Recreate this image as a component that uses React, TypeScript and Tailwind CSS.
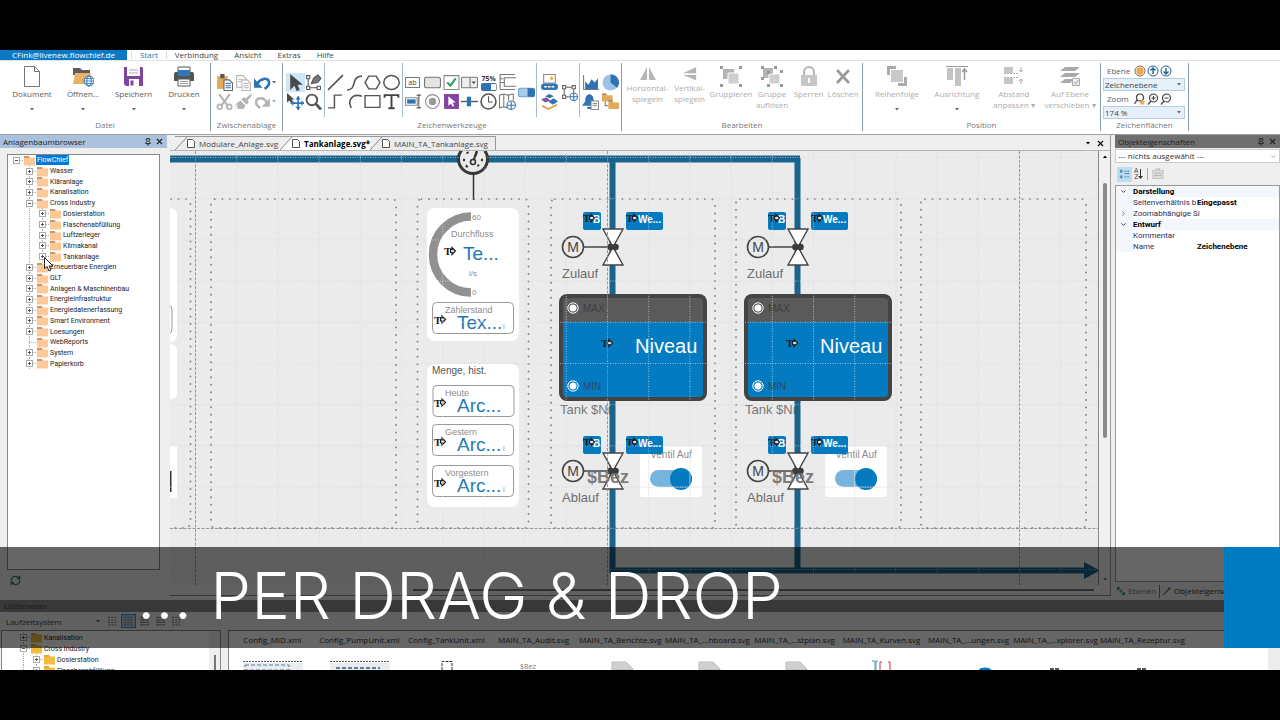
import React, { useState } from "react";
import { X, Pin, RefreshCw, ChevronDown, ChevronRight } from "lucide-react";

type IcProps = { children: React.ReactNode; className?: string; box?: string };

const Ic = ({ children, className = "w-[17px] h-[17px]", box = "0 0 16 16" }: IcProps) => (
    <svg viewBox={box} className={className} fill="none" aria-hidden="true">
        {children}
    </svg>
);

const Caret = ({ className = "text-[#666]" }: { className?: string }) => (
    <svg viewBox="0 0 4 3" className={`h-[3px] w-[4px] shrink-0 ${className}`} aria-hidden="true">
        <path d="M0 0h4L2 2.5z" fill="currentColor" />
    </svg>
);

/* ---------- ribbon ---------- */

const BigButton = ({ label, icon, width, caret, off }: {
    label: string[]; icon: React.ReactNode; width: string; caret?: boolean; off?: boolean;
}) => (
    <button type="button" className={`flex h-[46px] flex-col items-center ${width} ${off ? "text-[#adadad]" : "text-[#5a5a5a]"}`}>
        {icon}
        {label.map((l) => (
            <span key={l} className="block leading-[11px] whitespace-nowrap">{l}</span>
        ))}
        {caret && <span className="mt-auto flex h-[6px] items-center"><Caret /></span>}
    </button>
);

const Tool = ({ name, children, active }: { name: string; children: React.ReactNode; active?: boolean }) => (
    <button type="button" aria-label={name} className={`flex h-[19px] items-center justify-center ${active ? "bg-[#cfe6f8]" : ""}`}>
        <Ic>{children}</Ic>
    </button>
);

const Group = ({ title, width, children }: { title: string; width: string; children: React.ReactNode }) => (
    <section className={`flex shrink-0 flex-col border-r border-[#8b9ba8] ${width}`}>
        <div className="flex flex-1 justify-center">{children}</div>
        <h2 className="pb-[1px] text-center leading-[10px] text-[#777]">{title}</h2>
    </section>
);

const Sep = () => <i className="mx-[1px] h-[54px] w-px shrink-0 bg-[#a5bccb]" />;

const G = "#b4b4b4";
const D = "#555";
const B = "#2f73b5";

const Ribbon = () => (
    <div className="flex h-[73px] shrink-0 overflow-hidden bg-white pt-[2px] pb-[3px]">
        <Group title="Datei" width="w-[211px]">
            <div className="flex w-full gap-[1px] pt-[3px] pl-[7px]">
                <BigButton label={["Dokument"]} width="w-[50px]" caret icon={
                    <Ic className="mb-[1px] h-[21px] w-[20px]" box="0 0 20 21"><path d="M2.500 .5h10l5 5v15h-15zM12.500 .5v5h5" stroke="#777" fill="#fff" /></Ic>
                } />
                <BigButton label={["Öffnen..."]} width="w-[50px]" caret icon={
                    <Ic className="mb-[1px] h-[21px] w-[22px]" box="0 0 22 21">
                        <path d="M1 2h7l2 2h8v5H1z" fill="#5d5d5d" /><path d="M3 7h16l-3 11H1z" fill="#eab168" />
                        <circle cx="17" cy="15" r="5" fill="#fff" stroke={B} /><ellipse cx="17" cy="15" rx="2.200" ry="5" stroke={B} /><path d="M12 15h10M13 12.500h8M13 17.500h8" stroke={B} strokeWidth=".8" />
                    </Ic>
                } />
                <BigButton label={["Speichern"]} width="w-[49px]" caret icon={
                    <Ic className="mb-[1px] h-[21px] w-[21px]" box="0 0 21 21">
                        <path d="M1 1h18l1 1v18H3l-2-2z" fill="#7d45a0" /><path d="M4 1h13v9H4z" fill="#fff" /><path d="M6 4h9M6 7h9" stroke="#aaa" /><path d="M6 13h10v7H6z" fill="#fff" /><path d="M7.500 14.500h3v5h-3z" fill="#7d45a0" />
                    </Ic>
                } />
                <BigButton label={["Drucken"]} width="w-[50px]" caret icon={
                    <Ic className="mb-[1px] h-[21px] w-[22px]" box="0 0 22 21">
                        <path d="M5 1h12v5H5z" fill="#fff" stroke="#555" /><path d="M2 6h18l1 2v7H1V8z" fill="#555" /><path d="M5 4h12v6H5z" fill="#3379b8" /><path d="M5 13h12v7H5z" fill="#fff" stroke="#555" /><path d="M7 15.500h8M7 17.500h8" stroke="#999" />
                    </Ic>
                } />
            </div>
        </Group>

        <Group title="Zwischenablage" width="w-[72px]">
            <div className="grid w-[64px] auto-rows-min grid-cols-[19px_19px_19px_7px] items-center pt-[10px]">
                <Tool name="Einfügen">
                    <path d="M1 2h10v12H1z" fill="#e3aa5c" /><path d="M4 0h4v4H4z" fill="#555" /><path d="M7.500 5.500h5l3 3v7h-8z" fill="#fff" stroke="#666" /><path d="M9 9h5M9 11h5M9 13h5" stroke={B} />
                </Tool>
                <Tool name="Kopieren">
                    <path d="M1.500 1.500h6l3 3v8h-9z" fill="#fff" stroke={G} /><path d="M6.500 5.500h5l3 3v7h-8z" fill="#fff" stroke={G} /><path d="M3 5h4M3 7h3M8 9h5M8 11h5M8 13h5" stroke={G} />
                </Tool>
                <Tool name="Rückgängig"><path d="M3 9c3-5 10-6 11-2 1 3-1 5-4 7" stroke={B} strokeWidth="2.400" /><path d="M0 4v9h8z" fill={B} /></Tool>
                <Caret />
                <Tool name="Ausschneiden">
                    <path d="M3 1l8 11M13 1L5 12" stroke={G} strokeWidth="2" /><circle cx="3.500" cy="13" r="2.300" stroke={G} strokeWidth="1.600" /><circle cx="12.500" cy="13" r="2.300" stroke={G} strokeWidth="1.600" />
                </Tool>
                <Tool name="Format übertragen"><path d="M15 1l-5 4-2-1-2 2 5 5 2-2-1-2 4-5zM5 7l5 5-2 3H2l1-2H0l3-2H0z" fill={G} /></Tool>
                <Tool name="Wiederholen"><path d="M12 9C9 3 2 4 2 9c0 2 2 4 4 5" stroke={G} strokeWidth="2.400" /><path d="M15 5v8H7z" fill={G} /></Tool>
                <Caret className="text-[#aaa]" />
            </div>
        </Group>

        <Group title="Zeichenwerkzeuge" width="w-[339px]">
            <div className="flex w-full items-start pl-[3px]">
                <div className="grid w-[37px] grid-cols-2 pt-[10px]">
                    <Tool name="Auswahl" active><path d="M3 0v15l4-4 2 5 3-1-2-5h5z" fill="#4a4a4a" /></Tool>
                    <Tool name="Punkte bearbeiten"><path d="M1.500 1.500h3v3h-3zM1.500 11.500h3v3h-3zM11.500 11.500h3v3h-3zM3 5v6M5 13h6" stroke={D} /><path d="M6 9l2-5 4-3 3 3-3 4z" stroke={D} fill="#777" /></Tool>
                    <Tool name="Verschieben"><path d="M0 0v9l2.500-2 1.500 3 1.500-1L4.500 6H7z" fill="#4a4a4a" /><path d="M10.500 3v13M4 9.500h13" stroke={B} strokeWidth="1.500" /><path d="M8 6l2.500-3L13 6zM8 13l2.500 3 2.500-3zM6 7v5L3 9.500zM13.500 7v5l3-2.500z" fill={B} /></Tool>
                    <Tool name="Lupe"><circle cx="6.500" cy="6.500" r="5" stroke={D} strokeWidth="1.800" /><path d="M10 10l5 5.500" stroke={D} strokeWidth="2.600" /></Tool>
                </div>
                <Sep />
                <div className="grid w-[75px] grid-cols-4 pt-[10px]">
                    <Tool name="Linie"><path d="M1 15L15 1" stroke={D} strokeWidth="1.500" /></Tool>
                    <Tool name="Kurve"><path d="M1 15c10 0 3-13 14-13" stroke={D} strokeWidth="1.500" /></Tool>
                    <Tool name="Vieleck"><path d="M4.500 2h7L15 8l-3.500 6h-7L1 8z" stroke={D} strokeWidth="1.400" /></Tool>
                    <Tool name="Ellipse"><ellipse cx="8" cy="8" rx="7.300" ry="6.500" stroke={D} strokeWidth="1.400" /></Tool>
                    <Tool name="Linienzug"><path d="M1 14h6V2h7" stroke={D} strokeWidth="1.400" /></Tool>
                    <Tool name="Bogen"><path d="M15 3C6 0 1 7 5 14" stroke={D} strokeWidth="1.500" /></Tool>
                    <Tool name="Rechteck"><path d="M1 2.500h14v11H1z" stroke={D} strokeWidth="1.300" /></Tool>
                    <Tool name="Text"><path d="M1.500 4.500V2h13v2.500M8 2v12M5 14.300h6" stroke="#444" strokeWidth="1.800" /></Tool>
                </div>
                <Sep />
                <div className="grid w-[113px] grid-cols-6 pt-[10px]">
                    <button type="button" aria-label="Textfeld" className="my-[4px] mr-[3px] ml-[1px] border border-[#777] text-[7px] leading-[9px] text-[#444]">ab</button>
                    <Tool name="Schaltfläche"><rect x=".5" y="3" width="15" height="10" rx="2" stroke="#777" fill="#e4e4e4" /></Tool>
                    <Tool name="Kontrollkästchen"><path d="M1 1.500h14v13H1z" stroke="#888" /><path d="M4 8l3 3 5-7" stroke="#2c9a63" strokeWidth="2" /></Tool>
                    <Tool name="Kombinationsfeld"><rect x=".5" y="3" width="15" height="10" rx="1" stroke="#777" fill="#eee" /><path d="M8.500 3v10" stroke="#777" /><path d="M10 7h4l-2 2.500z" fill="#444" /></Tool>
                    <button type="button" aria-label="Balken" className="flex flex-col items-center justify-center text-[7px] leading-[8px] font-bold text-[#333]">
                        75%
                        <span className="block h-[8px] w-[16px] rounded-[2px] border border-[#2f73b5] border-r-[#999] bg-linear-to-r from-[#2f73b5] from-65% to-white to-65%" />
                    </button>
                    <Tool name="Lineal"><path d="M1 .5h14M1 .5v14M1 4.500h3M1 8h4M1 14.500h14M5 3.500h11M5 3.500v8h11" stroke="#777" /></Tool>
                    <Tool name="Eingabe"><path d="M.5 4.500h11v7H.5z" stroke="#888" /><path d="M2 6h8v4H2z" fill={B} /><path d="M11 2h4M13 2v12M11 14h4" stroke="#555" /></Tool>
                    <Tool name="Optionsfeld"><circle cx="8" cy="8" r="6.500" stroke="#888" /><circle cx="8" cy="8" r="3.500" fill="#999" /></Tool>
                    <Tool name="Zeiger"><path d="M1 1h14v14H1z" fill="#8442a4" /><path d="M5 3v9l2.500-2 1.500 3 1.500-1L9 9h3z" fill="#fff" /></Tool>
                    <Tool name="Regler"><path d="M0 8h16" stroke="#555" strokeWidth="1.300" /><path d="M5.500 3.500h4v9h-4z" fill={B} /></Tool>
                    <Tool name="Uhr"><circle cx="8" cy="8" r="7" stroke={D} strokeWidth="1.500" /><path d="M8 3v5.500h4" stroke={D} /></Tool>
                    <Tool name="Karte"><path d="M.5 2l4-1 4 1 5-1v6M.5 2v12l4-1 4 1M4.500 1v12M9 2v5" stroke="#777" /><circle cx="11.500" cy="11.500" r="4" stroke={B} /><path d="M8 11.500h7M11.500 8v7" stroke={B} /></Tool>
                </div>
                <div className="grid w-[18px] pt-[20px]">
                    <Tool name="Schalter"><rect x=".5" y="4" width="15" height="8" rx="2" fill="#a5cdea" stroke="#6fa5cf" /><path d="M9 4h5q2 0 2 2v4q0 2-2 2H9z" fill={B} /></Tool>
                </div>
                <Sep />
                <div className="grid w-[23px] grid-cols-1 pt-[10px]">
                    <Tool name="Bild"><path d="M2.500 .5h11v8h-11z" fill="#fff" stroke="#888" /><circle cx="10" cy="4" r="1.600" fill="#eab13c" /><rect x="0" y="9" width="16" height="6" rx="3" fill={B} /><path d="M3 12h10" stroke="#fff" strokeWidth="1.600" strokeDasharray="2.500 1" /></Tool>
                    <Tool name="Symbole"><path d="M8 1l4 2-4 2-4-2z" fill={B} /><path d="M0 6l5-2 4 3-5 2z" fill="#7a5ba8" /><path d="M7 8l5-3 4 3-5 3z" fill={B} /><path d="M1 11l6 3 8-4v2l-8 4-6-3z" fill="#e0a050" /></Tool>
                </div>
                <div className="grid w-[17px] pt-[20px]">
                    <Tool name="Netzwerk"><path d="M1.500 1.500h3v3h-3zM10.500 1.500h3v3h-3zM1.500 10.500h3v3h-3zM5 3h5M3 5v5M12 5v3M5 12h3" stroke="#666" /><circle cx="12" cy="12" r="3.500" stroke={B} fill="#fff" /><path d="M8.500 12h7M12 8.500v7" stroke={B} /></Tool>
                </div>
                <Sep />
                <div className="grid w-[39px] grid-cols-2 pt-[10px]">
                    <Tool name="Kurven"><path d="M1.500 1v13.500H16" stroke="#777" /><path d="M3 14V7l3 3 3-5 3 3 3-4v10z" fill={B} /></Tool>
                    <Tool name="Kreisdiagramm"><circle cx="8" cy="8" r="7.500" fill="#9cc3e6" /><path d="M8 8V.5A7.500 7.500 0 0 1 14 13z" fill={B} /></Tool>
                    <Tool name="Alarme"><path d="M0 12l3-4c0-4 1-6 4-7 3 1 4 3 4 6v5zM5 13h4v2H5z" fill={B} /><path d="M8.500 7.500h7v8h-7z" fill="#fff" stroke="#888" /><path d="M10 10h4M10 12h4" stroke="#888" /></Tool>
                    <Tool name="Ordner"><path d="M0 1h4l1 1h5v6H0z" fill="#e3aa5c" /><path d="M6 8h4l1 1h5v6H6z" fill="#e3aa5c" /><path d="M0 1h4M6 7.500h4M3 8v4h3" stroke="#777" /></Tool>
                </div>
            </div>
        </Group>

        <Group title="Bearbeiten" width="w-[241px]">
            <div className="flex w-full pt-[3px] pl-[4px]">
                <BigButton off label={["Horizontal-", "spiegeln"]} width="w-[43px]" icon={<Ic className="h-[16px] w-[16px]"><path d="M7 1v13H0zM9 1v13h7z" fill={G} /></Ic>} />
                <BigButton off label={["Vertikal-", "spiegeln"]} width="w-[41px]" icon={<Ic className="h-[16px] w-[14px]"><path d="M15 0v7H0zM15 9v6L0 9z" fill={G} /></Ic>} />
                <BigButton off label={["Gruppieren"]} width="w-[42px]" icon={
                    <Ic className="mb-[1px] h-[21px] w-[22px]" box="0 0 22 21"><path d="M3 3h11v10H3z" fill={G} /><path d="M8 7h11v11H8z" fill="#cfcfcf" stroke="#fff" /><path d="M0 0h3v3H0zM19 0h3v3h-3zM0 18h3v3H0zM19 18h3v3h-3z" fill="#999" /></Ic>
                } />
                <BigButton off label={["Gruppe", "auflösen"]} width="w-[40px]" icon={
                    <Ic className="mb-[1px] h-[21px] w-[22px]" box="0 0 22 21"><path d="M2 2h10v10H2z" fill={G} /><path d="M8 8h11v10H8z" fill="#cfcfcf" stroke="#fff" /><path d="M0 0h3v3H0zM13 0h3v3h-3zM0 11h3v3H0zM6 5h3v3H6zM19 4h3v3h-3zM6 18h3v3H6zM19 18h3v3h-3z" fill="#999" /></Ic>
                } />
                <BigButton off label={["Sperren"]} width="w-[33px]" icon={
                    <Ic className="mb-[1px] h-[21px] w-[18px]" box="0 0 18 21"><path d="M4 10V6a5 5 0 0 1 10 0v4" stroke={G} strokeWidth="2" /><path d="M1 9h16v11H1z" fill="#c6c6c6" /><path d="M8 12h2v5H8z" fill="#fff" /></Ic>
                } />
                <BigButton off label={["Löschen"]} width="w-[36px]" icon={
                    <Ic className="mb-[1px] h-[21px] w-[16px]" box="0 0 16 21"><path d="M2 4l12 13M14 4L2 17" stroke="#999" strokeWidth="2.600" /></Ic>
                } />
            </div>
        </Group>

        <Group title="Position" width="w-[238px]">
            <div className="flex w-full pt-[3px] pl-[4px]">
                <BigButton off caret label={["Reihenfolge"]} width="w-[60px]" icon={
                    <Ic className="mb-[1px] h-[21px] w-[21px]" box="0 0 21 21"><path d="M0 0h9v3H3v6H0zM20 20h-9v-3h6v-6h3z" fill="#aaa" /><path d="M4 4h12v12H4z" fill="#c9c9c9" /></Ic>
                } />
                <BigButton off caret label={["Ausrichtung"]} width="w-[60px]" icon={
                    <Ic className="mb-[1px] h-[21px] w-[22px]" box="0 0 22 21"><path d="M0 .5h22" stroke="#999" /><path d="M1 2h6v12H1zM9 2h6v18H9z" fill="#c3c3c3" /><path d="M18.500 14V3M16 6l2.500-3L21 6" stroke="#999" strokeWidth="1.500" /></Ic>
                } />
                <BigButton off label={["Abstand", "anpassen ▾"]} width="w-[54px]" icon={
                    <Ic className="mb-[1px] h-[21px] w-[20px]" box="0 0 20 21"><path d="M0 1h9v6H0zM0 12h9v6H0z" fill="#c6c6c6" /><path d="M0 7.500h14M0 11.500h14" stroke="#aaa" strokeDasharray="2 1" /><path d="M17 1v5M15 4l2 2 2-2M17 18v-5M15 15l2-2 2 2" stroke="#aaa" /></Ic>
                } />
                <BigButton off label={["Auf Ebene", "verschieben ▾"]} width="w-[58px]" icon={
                    <Ic className="mb-[1px] h-[21px] w-[22px]" box="0 0 22 21"><path d="M6 1h15l-5 4H1zM6 7h15l-5 4H1zM6 13h10l-5 4H1z" fill="#aaa" /><path d="M13.500 12.500h7v7h-7z" fill="#eee" stroke="#aaa" /><path d="M15 16l1.500 2 3-4" stroke="#999" /></Ic>
                } />
            </div>
        </Group>

        <Group title="Zeichenflächen" width="w-[88px]">
            <div className="flex w-full flex-col pr-[3px] pl-[2px] text-[#5a5a5a]">
                <div className="flex h-[15px] items-center pl-[4px]">
                    <label htmlFor="ebene" className="w-[27px]">Ebene</label>
                    <Ic className="h-[12px] w-[39px]" box="0 0 39 12">
                        <circle cx="6" cy="6" r="5" stroke="#7c6a4c" fill="#fff" /><circle cx="6" cy="6" r="3.700" fill="#eba850" />
                        <circle cx="19" cy="6" r="5" stroke="#1f5f8b" /><path d="M19 9V3M16.500 5.500L19 3l2.500 2.500" stroke="#1f5f8b" strokeWidth="1.400" />
                        <circle cx="32" cy="6" r="5" stroke="#1f5f8b" /><path d="M32 3v6M29.500 6.500L32 9l2.500-2.500" stroke="#1f5f8b" strokeWidth="1.400" />
                    </Ic>
                </div>
                <Drop id="ebene" value="Zeichenebene" className="h-[13px] border border-[#b5cbe6] bg-[#e5f0fb] pl-[1px]" />
                <div className="flex h-[15px] items-center pl-[4px]">
                    <label htmlFor="zoom" className="w-[27px]">Zoom</label>
                    <Ic className="h-[12px] w-[38px]" box="0 0 38 12">
                        <g stroke="#444" strokeWidth="1.200"><circle cx="6" cy="4.500" r="3.500" /><path d="M3 7l-2.500 4" /><circle cx="19.500" cy="5" r="4" /><path d="M17 8l-3 3.500M17.500 5h4M19.500 3v4" /><circle cx="32.500" cy="5" r="4" /><path d="M30 8l-3 3.500M30.500 5h4" /></g>
                        <path d="M8 6l1 2 2.500.3L9.700 10l.4 2L8 11l-2 1 .4-2-1.900-1.700L7 8z" fill="#eba850" />
                    </Ic>
                </div>
                <Drop id="zoom" value="174 %" className="h-[13px] border border-[#b5cbe6] bg-[#e5f0fb] pl-[1px]" />
            </div>
        </Group>
    </div>
);

const Drop = ({ id, value, className, label }: { id: string; value: string; className: string; label?: string }) => (
    <span className={`flex items-center pr-[3px] text-[#444] ${className}`}>
        <select id={id} aria-label={label} className="min-w-0 flex-1 appearance-none bg-transparent leading-[11px] outline-none">
            <option>{value}</option>
        </select>
        <Caret />
    </span>
);

/* ---------- trees ---------- */

type Node = { label: string; depth: number; sign?: "+" | "-"; selected?: boolean };

const tree: Node[] = [
    { label: "FlowChief", depth: 0, sign: "-", selected: true },
    { label: "Wasser", depth: 1, sign: "+" },
    { label: "Kläranlage", depth: 1, sign: "+" },
    { label: "Kanalisation", depth: 1, sign: "+" },
    { label: "Cross Industry", depth: 1, sign: "-" },
    { label: "Dosierstation", depth: 2, sign: "+" },
    { label: "Flaschenabfüllung", depth: 2, sign: "+" },
    { label: "Luftzerleger", depth: 2, sign: "+" },
    { label: "Klimakanal", depth: 2, sign: "+" },
    { label: "Tankanlage", depth: 2, sign: "+" },
    { label: "Erneuerbare Energien", depth: 1, sign: "+" },
    { label: "GLT", depth: 1, sign: "+" },
    { label: "Anlagen & Maschinenbau", depth: 1, sign: "+" },
    { label: "Energieinfrastruktur", depth: 1, sign: "+" },
    { label: "Energiedatenerfassung", depth: 1, sign: "+" },
    { label: "Smart Environment", depth: 1, sign: "+" },
    { label: "Loesungen", depth: 1, sign: "+" },
    { label: "WebReports", depth: 1 },
    { label: "System", depth: 1, sign: "+" },
    { label: "Papierkorb", depth: 1, sign: "+" },
];

const runtimeTree: Node[] = [
    { label: "Kanalisation", depth: 1, sign: "+" },
    { label: "Cross Industry", depth: 1, sign: "-" },
    { label: "Dosierstation", depth: 2, sign: "+" },
    { label: "Flaschenabfüllung", depth: 2, sign: "+" },
];

const TreeRow = ({ node, folder, tab }: { node: Node; folder: string; tab: string }) => {
    const x = node.depth * 13;
    return (
        <li className="flex items-center">
            <svg width={x + 23} height="11" viewBox={`0 0 ${x + 23} 11`} className="shrink-0" aria-hidden="true">
                {node.depth > 0 && <path d="M16.500 0v11" stroke="#aaa" strokeDasharray="1 1" />}
                {node.depth > 1 && <path d="M29.500 0v11" stroke="#aaa" strokeDasharray="1 1" />}
                <path d={`M${x + 3} 5.500h8`} stroke="#aaa" strokeDasharray="1 1" />
                {node.sign && (
                    <>
                        <rect x={x + 0.5} y="2.500" width="6" height="6" fill="#fff" stroke="#aaa" />
                        <path d={`M${x + 2} 5.500h3${node.sign === "+" ? "m-1.500 -1.500v3" : ""}`} stroke="#555" />
                    </>
                )}
                <path d={`M${x + 11} 1h5l1 1.500h5v8h-11z`} fill={folder} />
                <path d={`M${x + 11} 2h5`} stroke={tab} />
            </svg>
            <span className={`px-[1px] leading-[10px] whitespace-nowrap ${node.selected ? "bg-[#0078d7] text-white" : ""}`}>{node.label}</span>
        </li>
    );
};

/* ---------- canvas ---------- */

const cols = Array.from({ length: 22 }, (_, i) => 195.5 + i * 41.2);
const rows = Array.from({ length: 11 }, (_, i) => 157.500 + i * 41.2);

const gridPath = cols.map((x) => `M${x} 151V585`).join("") + rows.map((y) => `M170 ${y}H1100`).join("");

// text placeholder: serif T followed by an arrow
const Placeholder = ({ x, y }: { x: number; y: number }) => (
    <g>
        <text x={x} y={y + 4} fontFamily="Liberation Serif" fontWeight="bold" fontSize="11" fill="#1c1c1c">T</text>
        <path d={`M${x + 6.5} ${y - 1.5}h1.500v-2l3.500 3.500 -3.500 3.500v-2h-1.500z`} fill="#ddd" stroke="#1c1c1c" strokeWidth="1.200" />
    </g>
);

const Valve = ({ y, name }: { y: number; name: string }) => (
    <g>
        <rect x="583" y={y - 35} width="18" height="18" rx="2" fill="#047bc1" />
        <text x="593" y={y - 24} fontSize="10" fontWeight="bold" fill="#fff">B</text>
        <rect x="626" y={y - 35} width="37" height="18" rx="2" fill="#047bc1" />
        <text x="638" y={y - 24} fontSize="10" fontWeight="bold" fill="#fff">We...</text>
        <Placeholder x={583} y={y - 29} />
        <Placeholder x={626} y={y - 29} />
        <path d={`M584 ${y}H613`} stroke="#444" strokeWidth="1.500" />
        <circle cx="573" cy={y} r="10.500" fill="none" stroke="#444" strokeWidth="1.600" />
        <text x="573" y={y + 5} fontSize="14" textAnchor="middle" fill="#444">M</text>
        <path d={`M603 ${y - 18}h20l-10 18zM603 ${y + 18}h20l-10 -18z`} fill="#fff" stroke="#444" strokeWidth="1.400" />
        <circle cx="610.500" cy={y} r="3.300" fill="#3c3c3c" /><circle cx="615.500" cy={y} r="3.300" fill="#3c3c3c" />
        <text x="562" y={y + 31} fontSize="13" fill="#6c6c6c">{name}</text>
    </g>
);

const TankUnit = ({ dx }: { dx: number }) => (
    <g transform={`translate(${dx} 0)`}>
        <text x="560" y="414" fontSize="13" fill="#777">Tank $Nr</text>
        <path d="M612.500 158V572" stroke="#1a638c" strokeWidth="6" />
        <rect x="561" y="296" width="144" height="102" rx="6" fill="#047bc1" />
        <path d="M561 322v-26h144v26z" fill="#5a5a5a" />
        <rect x="561" y="296" width="144" height="103" rx="6" fill="none" stroke="#444" strokeWidth="4" />
        {[308, 386].map((y) => (
            <g key={y}><circle cx="573" cy={y} r="5.200" fill="none" stroke="#fff" /><circle cx="573" cy={y} r="3.500" fill="#fff" /></g>
        ))}
        <text x="583" y="312" fontSize="10" fill="#3f3f3f">MAX</text>
        <text x="583" y="390" fontSize="10" fill="#2d4a66">MIN</text>
        <Placeholder x={601} y={343} />
        <text x="635" y="353" fontSize="20" fill="#fff">Niveau</text>
        <Valve y={247} name="Zulauf" />
        <Valve y={471} name="Ablauf" />
        <text x="587" y="483" fontSize="18" fontWeight="bold" fill="#6d6d6d" fillOpacity=".9">$Bez</text>
    </g>
);

const Reading = ({ x, y, label, value, unit }: { x: number; y: number; label: string; value: string; unit?: string }) => (
    <g>
        <rect x={x} y={y} width="81" height="31" rx="4" fill="#fff" stroke="#999" />
        <text x="445" y={y + 10} fontSize="9" fill="#8c8c8c">{label}</text>
        <Placeholder x={434} y={y + 17} />
        <text x="457" y={y + 26} fontSize="19" fill="#1b79b3">{value}</text>
        {unit && <text x="503" y={y + 26} fontSize="8" fill="#999">{unit}</text>}
    </g>
);

const VentilSwitch = ({ id, className }: { id: string; className: string }) => {
    const [open, setOpen] = useState(true);
    return (
        <div className={`absolute flex h-[51px] w-[62px] flex-col items-center rounded-[3px] bg-white pt-[3px] ${className}`}>
            <label htmlFor={id} className="text-[10px] leading-[12px] text-[#8c8c8c]">Ventil Auf</label>
            <span className="mt-[9px] flex h-[17px] w-[42px] items-center rounded-full bg-[#77b5de]">
                <input id={id} type="checkbox" role="switch" checked={open} onChange={(e) => setOpen(e.target.checked)}
                    className="ml-auto size-[22px] appearance-none rounded-full bg-[#047bc1] not-checked:mr-auto not-checked:ml-0" />
            </span>
        </div>
    );
};

const Canvas = () => (
    <div className="relative min-h-0 min-w-0 flex-1 overflow-hidden bg-[#ebebeb] font-['Liberation_Sans',sans-serif]">
        <VentilSwitch id="ventil1" className="top-[295px] left-[470px]" />
        <VentilSwitch id="ventil2" className="top-[295px] left-[655px]" />
        <svg width="930" height="434" viewBox="170 151 930 434" className="pointer-events-none absolute top-0 left-0" role="img" aria-label="Tankanlage">
            <path d={gridPath} stroke="#d3d3d3" strokeOpacity=".5" />
            <g fill="#fff">
                <path d="M170 208q7 0 7 8v118q0 8-7 8zM170 344q7 0 7 8v42q0 5-7 5zM170 446h7v52h-7z" />
                <rect x="427" y="208" width="92" height="133" rx="8" />
                <rect x="427" y="364" width="92" height="143" rx="8" />
            </g>
            <path d="M170.500 471v21" stroke="#333" strokeWidth="2" />
            <path d="M170 306q2 0 2 5v17q0 5-2 5" stroke="#999" fill="none" />

            <g fill="none" stroke="#8a8a8a" strokeWidth="2" strokeDasharray="0 7.500" strokeLinecap="round">
                <path d="M171 199H188L190.500 204V524L188 528H171" />
                <rect x="211" y="199" width="185" height="329" rx="4" />
                <rect x="417.500" y="199" width="111" height="329" rx="4" />
                <rect x="551" y="199" width="164" height="329" rx="4" />
                <rect x="736" y="199" width="165" height="329" rx="4" />
                <rect x="921" y="199" width="165" height="329" rx="4" />
            </g>

            <path d="M471 216.500a37.500 37.500 0 0 0 0 76" fill="none" stroke="#919191" strokeWidth="8.500" />
            <g fontSize="8" fill="#8c8c8c">
                <text x="472" y="220">60</text>
                <text x="472" y="295">0</text>
                <text x="469" y="276">l/s</text>
                <text x="451" y="237" fontSize="9">Durchfluss</text>
            </g>
            <Placeholder x={444} y={251} />
            <text x="463" y="260" fontSize="19" fill="#1b79b3">Te...</text>
            <Reading x={432.500} y={302.500} label="Zählerstand" value="Tex..." unit="l" />
            <text x="432" y="374" fontSize="10" fill="#555">Menge, hist.</text>
            <Reading x={433} y={385.500} label="Heute" value="Arc..." />
            <Reading x={432.500} y={424.500} label="Gestern" value="Arc..." unit="l" />
            <Reading x={432.500} y={465.500} label="Vorgestern" value="Arc..." unit="l" />

            <path d="M170 159H800" stroke="#1a638c" strokeWidth="7" />
            <path d="M610 570.500H1086" stroke="#1a638c" strokeWidth="6" />
            <path d="M1084 562l16 8.500-16 8.500z" fill="#1a638c" />
            <TankUnit dx={0} />
            <TankUnit dx={185} />

            <path d="M473.500 174V200" stroke="#333" strokeWidth="1.500" />
            <circle cx="473" cy="159" r="14.500" fill="#ebebeb" stroke="#383838" strokeWidth="3" />
            <path d="M463 160h2M481 160h2M467 152l1 1.500M479 166l-1.500-1M466 167l1.500-1.500" stroke="#333" strokeWidth="2.500" />
            <path d="M473 162L477 151" stroke="#333" strokeWidth="2.500" /><circle cx="473" cy="162" r="2.500" fill="#ebebeb" stroke="#333" strokeWidth="1.600" />

            <path d={gridPath} stroke="#fff" strokeOpacity=".55" strokeDasharray="1 1.500" />
            <path d="M195.500 151V585M607.500 151V585M1019.500 151V585M170 528.500H1100" stroke="#777" strokeOpacity=".7" strokeDasharray="3 1.500" />
        </svg>
    </div>
);

const docs = ["Modulare_Anlage.svg", "Tankanlage.svg*", "MAIN_TA_Tankanlage.svg"];

const DocTabs = () => (
    <div className="flex h-[16px] shrink-0 items-end border-b border-[#b5b5b5] bg-[#efefef] pl-[5px]">
        {docs.map((d, i) => (
            <button key={d} type="button" className={`flex h-[14px] items-center border-t border-r border-[#999] text-[#444] ${i > 0 ? "-ml-[6px]" : ""} ${i === 1 ? "bg-white pr-[5px] font-bold text-black" : "bg-[#ececec] pr-[7px]"}`}>
                <svg viewBox="0 0 24 13" className="h-[13px] w-[24px] shrink-0" aria-hidden="true">
                    <path d="M0 0v13L12 0z" fill="#efefef" /><path d="M0 13L12 0" stroke="#888" />
                    <path d="M12.500 2.500h5l2 2v6h-7z" fill="#fff" stroke="#555" />
                </svg>
                {d}
            </button>
        ))}
        <span className="mr-[5px] ml-auto flex h-[14px] items-center gap-[6px] text-black"><Caret className="text-black" /><X size={9} strokeWidth={3} /></span>
    </div>
);

/* ---------- side panels ---------- */

const PanelTitle = ({ title, className }: { title: string; className: string }) => (
    <div className={`flex h-[13px] shrink-0 items-center pr-[3px] pl-[3px] text-[#222] ${className}`}>
        <h2 className="flex-1">{title}</h2>
        <button type="button" aria-label={`${title} anheften`} className="mr-[3px]"><Pin size={8} strokeWidth={3} /></button>
        <button type="button" aria-label={`${title} schließen`}><X size={9} strokeWidth={3} /></button>
    </div>
);

const props = [
    { name: "Darstellung", head: true, icon: "down" },
    { name: "Seitenverhältnis b", value: "Eingepasst" },
    { name: "Zoomabhängige Si", icon: "right" },
    { name: "Entwurf", head: true, icon: "down" },
    { name: "Kommentar", value: "" },
    { name: "Name", value: "Zeichenebene" },
];

const PropertyPanel = () => (
    <aside className="flex w-[165px] shrink-0 flex-col">
        <PanelTitle title="Objekteigenschaften" className="bg-[#6f6f6f]" />
        <div className="mt-[1px] flex h-[14px] items-center border border-[#ccc] bg-white pr-[2px] pl-[2px]">
            <select aria-label="Objekt" className="min-w-0 flex-1 appearance-none leading-[12px] text-[#333]"><option>--- nichts ausgewählt ---</option></select>
            <ChevronDown size={7} color="#777" />
        </div>
        <div className="flex h-[22px] items-center gap-[2px] pl-[2px]">
            <button type="button" aria-label="Nach Kategorien" className="bg-[#b9def6]"><Ic className="h-[15px] w-[15px]"><path d="M3 3h3v3H3zM3 9h3v3H3z" fill="#6b8ba8" /><path d="M8 4.500h2M11 4.500h2M8 10.500h2M11 10.500h2M8 7h5" stroke="#58738c" /></Ic></button>
            <button type="button" aria-label="Alphabetisch" className="flex items-center text-[7px] leading-[6px] text-[#444]"><span>A<br />Z</span><Ic className="h-[12px] w-[5px]" box="0 0 5 12"><path d="M2.500 1v9" stroke="#333" /><path d="M0 8h5l-2.500 3z" fill="#333" /></Ic></button>
            <i className="mx-[2px] h-[12px] w-px bg-[#aaa]" />
            <Ic className="h-[12px] w-[12px]"><path d="M1 3h14v11H1z" fill="#ddd" stroke="#bbb" /><path d="M3 7h10M3 10h10M6 3V1h4v2" stroke="#aaa" /></Ic>
        </div>
        <div className="flex-1 border border-[#999] bg-white">
            <table className="w-full table-fixed border-collapse font-['Roboto',sans-serif]">
                <tbody>
                    {props.map((p) => (
                        <tr key={p.name} className={`h-[11px] leading-[11px] text-[#2d2d55] ${p.head ? "bg-[#f3f6fb]" : ""}`}>
                            <td className="w-[17px] bg-[#f3f6fb] pl-[4px]">{p.icon === "down" && <ChevronDown size={7} strokeWidth={3} />}{p.icon === "right" && <ChevronRight size={7} />}</td>
                            <th scope="row" className={`w-[64px] text-left whitespace-nowrap ${p.head ? "font-bold text-black" : "font-normal"}`}>{p.name}</th>
                            <td className="font-bold text-black">{p.value}</td>
                        </tr>
                    ))}
                </tbody>
            </table>
        </div>
        <div className="flex h-[18px] items-center overflow-hidden whitespace-nowrap text-[#333]">
            <button type="button" className="flex h-[13px] w-[45px] items-center gap-[2px] border-r border-[#777] pl-[1px] text-[#777]"><Ic className="h-[10px] w-[10px]"><path d="M1 1h6v6H1zM5 5h6v6H5zM9 9h6v6H9z" fill="#3c8f94" stroke="#fff" /></Ic>Ebenen</button>
            <button type="button" className="flex items-center gap-[3px] pl-[2px]"><Ic className="h-[9px] w-[9px]"><path d="M2 14L12 4" stroke="#777" strokeWidth="2.500" /><circle cx="13" cy="3" r="2.500" fill="#777" /></Ic>Objekteigenschaften</button>
        </div>
    </aside>
);

/* ---------- lower browser ---------- */

const files = [
    "Config_MID.xml", "Config_PumpUnit.xml", "Config_TankUnit.xml", "MAIN_TA_Audit.svg", "MAIN_TA_Berichte.svg", "MAIN_TA_...hboard.svg",
    "MAIN_TA_...stplan.svg", "MAIN_TA_Kurven.svg", "MAIN_TA_...ungen.svg", "MAIN_TA_...xplorer.svg", "MAIN_TA_Rezeptur.svg",
];

const Thumb = ({ index }: { index: number }) => (
    <svg viewBox="0 0 60 10" className="h-[10px] w-[60px]" fill="none" aria-hidden="true">
        {index < 2 && <><path d="M0 1.500h60" stroke="#556" strokeDasharray="2 1" /><path d="M0 3h60v7H0z" fill="#e8edf0" /><path d={index === 0 ? "M2 5h44v5H2z" : "M6 8h44"} stroke="#679" strokeWidth={index === 0 ? 1 : 2} strokeDasharray="4 2" /></>}
        {index === 2 && <path d="M25 10V1.500h10V10" stroke="#333" strokeDasharray="3 1" />}
        {index === 3 && <text x="16" y="9" fontSize="7" fill="#777">$Bez</text>}
        {index > 3 && index < 7 && <path d="M21 2h14l7 7v1H21z" fill="#d0d0d0" stroke="#bbb" />}
        {index === 7 && <><path d="M20 1h3v9M24 10V1h2" stroke="#4a90b8" /><path d="M28 10V2h2M36 2h2v8" stroke="#c33" /></>}
        {index === 8 && <ellipse cx="46" cy="10" rx="6" ry="2.500" fill="#047bc1" />}
        {index > 8 && <path d="M24 9h10" stroke="#555" strokeWidth="2" strokeDasharray="4 1" />}
    </svg>
);

const LowerBrowser = () => (
    <section className="flex h-[70px] shrink-0 flex-col overflow-hidden">
        <h2 className="h-[12px] shrink-0 bg-[#8d8d8d] pl-[4px] leading-[12px] text-[#444]">Listbrowser</h2>
        <div className="flex h-[18px] shrink-0 items-center gap-[1px] pl-[6px]">
            <Drop id="system" label="System" value="Laufzeitsystem" className="mr-[1px] w-[97px]" />
            {["Symbole", "Liste", "Details", "Vorschau", "Raster"].map((n, i) => (
                <button key={n} type="button" aria-label={n} className={`flex h-[14px] w-[15px] items-center justify-center border ${i === 1 ? "border-[#3b8ed0] bg-[#b5cfe4]" : "border-transparent"}`}>
                    <Ic className="h-[10px] w-[11px]"><path d="M1 2h14M1 6h14M1 10h14M1 14h14" stroke="#888" strokeWidth="2" strokeDasharray={i === 2 || i === 3 ? "8 1" : "3 2"} /></Ic>
                </button>
            ))}
        </div>
        <div className="flex min-h-0 flex-1 gap-[7px] pl-[1px]">
            <div className="flex w-[220px] shrink-0 justify-between overflow-hidden border border-b-0 border-[#888] bg-white pl-[5px]">
                <ul className="pt-[1px] font-['Roboto',sans-serif] text-[7px] text-[#222]">{runtimeTree.map((n) => <TreeRow key={n.label} node={n} folder="#f2bd3d" tab="#d19a1d" />)}</ul>
                <span className="flex w-[11px] justify-center bg-[#efefef] pt-[24px]"><i className="w-[2px] bg-[#777]" /></span>
            </div>
            <div className="flex min-w-0 flex-1 overflow-hidden border-t border-l border-[#888] bg-white">
                {files.map((f, i) => (
                    <figure key={f} className="flex w-[87px] shrink-0 flex-col items-center justify-between pt-[3px]">
                        <figcaption className="leading-[11px] text-[#333]">{f}</figcaption>
                        <Thumb index={i} />
                    </figure>
                ))}
                <span className="ml-auto w-[12px] bg-[#ececec]" />
            </div>
        </div>
    </section>
);

const menu = ["Start", "Verbindung", "Ansicht", "Extras", "Hilfe"];

const App = () => (
    <div className="relative flex h-screen min-h-[480px] flex-col overflow-hidden bg-black py-[50px] font-['Open_Sans',sans-serif] text-[8px]">
        <div className="flex min-h-0 flex-1 flex-col overflow-hidden bg-[#efefef]">
            <nav className="flex h-[11px] shrink-0 items-center border-b border-[#e2e2e2] bg-white leading-[8px] text-[#444]">
                <button type="button" className="mr-[4px] h-full w-[127px] bg-[#0b78c4] text-center font-medium text-white">CFink@livenew.flowchief.de</button>
                {menu.map((m) => (
                    <a key={m} href="#" className={`px-[8px] ${m === "Start" ? "border-x border-[#ddd] text-[#1a73b8]" : ""}`}>{m}</a>
                ))}
            </nav>
            <Ribbon />

            <main className="flex min-h-0 flex-1 border-t border-[#a0a0a0]">
                <aside className="flex w-[167px] shrink-0 flex-col">
                    <PanelTitle title="Anlagenbaumbrowser" className="bg-[#a9c1dd]" />
                    <div className="relative mx-[7px] mt-[6px] mb-[3px] flex-1 overflow-hidden border border-[#888] bg-white pl-[5px]">
                        <ul className="grid h-[214px] auto-rows-fr font-['Roboto',sans-serif] text-[7px] text-[#222]">
                            {tree.map((n) => <TreeRow key={n.label} node={n} folder="#fbc896" tab="#8a6a4a" />)}
                        </ul>
                        <svg viewBox="0 0 10 15" className="absolute top-[102px] left-[36px] h-[15px] w-[10px]" aria-hidden="true">
                            <path d="M.5 .5v11l2.500-2 2 4.500 2-1-2-4h4z" fill="#fff" stroke="#222" />
                        </svg>
                    </div>
                    <button type="button" aria-label="Aktualisieren" className="mb-[13px] ml-[8px] flex h-[14px] w-[14px] items-center justify-center"><RefreshCw size={11} color="#2c8a70" strokeWidth={3} /></button>
                </aside>

                <section className="mb-[4px] ml-[3px] flex min-w-0 flex-1 flex-col border-r border-[#999]">
                    <DocTabs />
                    <div className="flex min-h-0 flex-1">
                        <Canvas />
                        <span className="flex w-[12px] flex-col items-center border-l border-[#888] bg-[#f1f1f1] py-[4px]">
                            <Caret className="rotate-180" />
                            <i className="mt-[25px] h-[255px] w-[4px] rounded-full bg-[#8a8a8a]" />
                            <span className="mt-auto"><Caret /></span>
                        </span>
                    </div>
                    <span className="flex h-[11px] shrink-0 items-center border-b border-[#888] px-[16px]"><i className="ml-auto h-[2px] w-[75%] bg-[#777]" /></span>
                </section>

                <span className="w-[4px] shrink-0" />
                <PropertyPanel />
            </main>

            <LowerBrowser />
        </div>

        <div className="absolute inset-x-0 bottom-[72px] flex h-[101px] bg-black/60">
            <p className="flex-1 pl-[137px] font-['Inter',sans-serif] text-[65px] leading-[97px] font-light whitespace-nowrap text-white">... PER DRAG &amp; DROP</p>
            <span className="w-[56px] bg-[#007cc3]" />
        </div>
    </div>
);

export default App;
